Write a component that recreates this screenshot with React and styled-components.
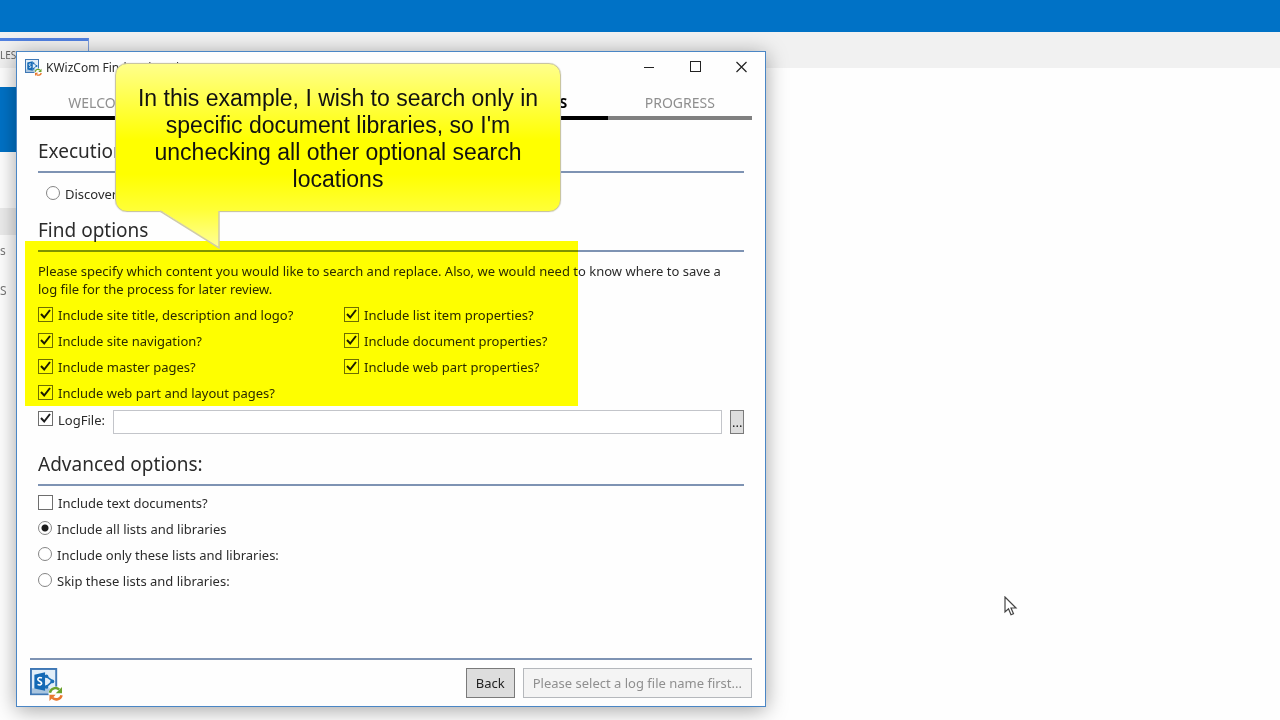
import { useState } from "react";
import styled, { createGlobalStyle } from "styled-components";

const colors = {
  brand: "#0072c6",
  ribbon: "#f1f1f1",
  windowBorder: "#4a86c5",
  rule: "#7e93b3",
  text: "#2b2b2b",
  muted: "#8f8f8f",
};

const GlobalStyle = createGlobalStyle`
  * {
    box-sizing: border-box;
  }

  body {
    margin: 0;
    background: #fefefe;
    color: ${colors.text};
    font-family: "Noto Sans", "Open Sans", sans-serif;
    font-size: 13px;
  }

  button,
  input {
    font: inherit;
  }
`;

const Desktop = styled.div`
  position: relative;
  min-height: 100vh;
  overflow: hidden;
`;

const SuiteBar = styled.header`
  height: 32px;
  background: ${colors.brand};
`;

const Ribbon = styled.nav`
  display: flex;
  height: 36px;
  padding-top: 6px;
  background: ${colors.ribbon};
`;

const RibbonTabs = styled.div`
  display: flex;
  gap: 22px;
  width: 89px;
  padding-top: 7px;
  border-top: 3px solid #5181e0;
  border-right: 1px solid #7d9ddc;
  color: #666;
  font-size: 10px;
  line-height: 14px;
`;

const SiteColumn = styled.aside`
  display: flex;
  flex-direction: column;
  width: 17px;
  padding-top: 19px;
  color: #777;
  font-size: 12px;
  line-height: 32px;
`;

const SiteLogo = styled.div`
  height: 65px;
  margin-bottom: 56px;
  background: ${colors.brand};
`;

const SelectedNav = styled.div`
  height: 27px;
  background: #ececec;
`;

const NavItem = styled.span`
  margin-bottom: 8px;
`;

const Window = styled.main`
  position: absolute;
  top: 51px;
  bottom: 13px;
  left: 16px;
  display: flex;
  flex-direction: column;
  width: 750px;
  border: 1px solid ${colors.windowBorder};
  background: #fefefe;
  box-shadow: 0 3px 20px rgba(0, 0, 0, 0.36);
`;

const TitleBar = styled.div`
  display: flex;
  align-items: center;
  height: 30px;
  padding-left: 8px;
`;

const Title = styled.h1`
  flex: 1;
  margin: 0 0 0 4px;
  font-size: 12px;
  font-weight: 400;
`;

const WindowButton = styled.button`
  display: grid;
  place-items: center;
  width: 46px;
  height: 30px;
  padding: 0;
  border: 0;
  background: none;
`;

const Steps = styled.ol`
  display: flex;
  margin: 0 13px;
  padding: 0;
  list-style: none;
`;

const Step = styled.li`
  flex: 1 1 0;
  padding: 10px 0 2px;
  border-bottom: 4px solid ${({ $reached }) => ($reached ? "#000" : "#808080")};
  color: ${({ $current }) => ($current ? "#000" : colors.muted)};
  font-size: 14px;
  font-weight: ${({ $current }) => ($current ? 700 : 400)};
  line-height: 22px;
  text-align: center;
`;

const Content = styled.form`
  flex: 1;
  padding: 13px 21px 0;
`;

const Section = styled.section`
  position: relative;
  margin-bottom: ${({ $gap }) => $gap}px;
`;

const SectionTitle = styled.h2`
  margin: 0;
  padding-bottom: 2px;
  border-bottom: 2px solid ${colors.rule};
  font-size: 19px;
  font-weight: 400;
  line-height: 36px;
`;

const Highlight = styled.div`
  position: absolute;
  top: 29px;
  right: 166px;
  bottom: 27px;
  left: -13px;
  background: #ff0;
  mix-blend-mode: multiply;
  pointer-events: none;
`;

const Hint = styled.p`
  margin: 10px 0 4px;
  padding-right: 8px;
  line-height: 18px;
`;

const OptionColumns = styled.div`
  display: grid;
  grid-template-columns: 306px 1fr;
`;

const OptionList = styled.div`
  padding: ${({ $inset }) => ($inset ? "8px 8px 0" : "4px 0 0")};
`;

const Option = styled.label`
  display: flex;
  align-items: center;
  gap: 5px;
  height: 26px;
`;

const Mark = styled.span`
  display: grid;
  flex: none;
  margin-bottom: 2px;

  > * {
    grid-area: 1 / 1;
  }

  svg {
    pointer-events: none;
  }
`;

const CheckInput = styled.input`
  width: 15px;
  height: 15px;
  margin: 0;
  border: 1px solid #6e6e6e;
  background: #fff;
  appearance: none;
`;

const RadioInput = styled.input`
  width: 14px;
  height: 14px;
  margin: 0;
  border: 1px solid #858585;
  border-radius: 50%;
  background: #fff;
  appearance: none;

  &:checked {
    background: radial-gradient(circle, #1c1c1c 3px, #fff 4px);
  }
`;

const LogRow = styled.div`
  display: flex;
  align-items: center;
  gap: 8px;
  height: 27px;
`;

const LogInput = styled.input`
  flex: 1;
  min-width: 0;
  height: 24px;
  margin-top: 5px;
  border: 1px solid #c3c5ca;
  background: #fff;
`;

const Button = styled.button`
  height: ${({ $small }) => ($small ? 24 : 30)}px;
  padding: ${({ $small }) => ($small ? "0 1px" : "0 9px")};
  border: 1px solid #7a7a7a;
  background: #dddddd;
  color: #222;
  line-height: 20px;

  &:disabled {
    border-color: #b5b8bc;
    background: #f4f4f4;
    color: ${colors.muted};
  }
`;

const BrowseButton = styled(Button)`
  width: 14px;
  margin-top: 5px;
`;

const Footer = styled.footer`
  display: flex;
  align-items: flex-start;
  gap: 8px;
  margin: 0 13px;
  padding: 8px 0 6px;
  border-top: 2px solid ${colors.rule};
`;

const FooterLogo = styled.div`
  flex: 1;
  height: 32px;
`;

const Callout = styled.aside`
  position: absolute;
  top: 63px;
  left: 115px;
  width: 446px;
  padding: 21px 20px 18px;
  border: 1px solid #c9c5a0;
  border-radius: 12px;
  background: linear-gradient(#ffff8c, #ffff00 52%, #ffff00 75%, #ffff38);
  box-shadow: 0 0 1px #b0b0b0;
  color: #111;
  font-family: "Liberation Sans", Arial, sans-serif;
  font-size: 23px;
  line-height: 27px;
  text-align: center;

  svg {
    position: absolute;
    top: 100%;
    left: 43px;
    margin-top: -1px;
  }
`;

const Pointer = styled.svg`
  position: absolute;
  top: 596px;
  left: 1004px;
`;

const AppLogo = ({ size }) => (
  <svg width={size} height={size} viewBox="0 0 34 34" aria-hidden="true">
    <rect x="1" y="1" width="26" height="26" fill="#e2eef8" stroke="#3f78b5" strokeWidth="2" />
    <path d="M2 21 H26 V26 H2 Z" fill="#a9c5df" />
    <path d="M16 8 L23.500 13.500 L16 20" fill="none" stroke="#1b6fb8" strokeWidth="1.600" />
    <circle cx="17" cy="8.500" r="1.900" fill="#1b6fb8" />
    <circle cx="17" cy="19.500" r="1.900" fill="#1b6fb8" />
    <circle cx="23" cy="13.800" r="2" fill="#1b6fb8" />
    <path d="M4.500 7 L15.500 4.500 V23.500 L4.500 21 Z" fill="#1469b5" />
    <path
      d="M12.300 10.300 C9.800 9.200 8 10 8.100 11.800 C8.200 13.800 12.100 13.500 12 15.700 C11.900 17.600 9.600 17.900 7.800 16.900"
      fill="none"
      stroke="#fff"
      strokeWidth="1.700"
    />
    <circle cx="26.500" cy="26.500" r="7.500" fill="#fefefe" />
    <path d="M20.500 25.500 C21.500 20.500 27 19.500 30 22.200" fill="none" stroke="#6aa22c" strokeWidth="2.600" />
    <path d="M33 19.500 V26 H26.500 Z" fill="#6aa22c" />
    <path d="M32.500 28 C31.500 32.500 26 33.500 23 30.800" fill="none" stroke="#e8772e" strokeWidth="2.600" />
    <path d="M20 34 V27.500 H26.500 Z" fill="#e8772e" />
  </svg>
);

const Checkbox = ({ label, initial = true }) => {
  const [checked, setChecked] = useState(initial);

  return (
    <Option>
      <Mark>
        <CheckInput type="checkbox" checked={checked} onChange={(e) => setChecked(e.target.checked)} />
        {checked && (
          <svg width="15" height="15" viewBox="0 0 15 15" aria-hidden="true">
            <path d="M3 7 L6.200 10.500 L12 3" fill="none" stroke="#1c1c1c" strokeWidth="2" />
          </svg>
        )}
      </Mark>
      {label}
    </Option>
  );
};

const Radio = ({ label, name, initial }) => (
  <Option>
    <Mark>
      <RadioInput type="radio" name={name} defaultChecked={initial} />
    </Mark>
    {label}
  </Option>
);

const steps = ["WELCOME", "", "", "OPTIONS", "PROGRESS"];
const currentStep = 3;

const siteOptions = [
  "Include site title, description and logo?",
  "Include site navigation?",
  "Include master pages?",
  "Include web part and layout pages?",
];

const itemOptions = ["Include list item properties?", "Include document properties?", "Include web part properties?"];

const App = () => (
  <Desktop>
    <GlobalStyle />
    <SuiteBar />
    <Ribbon>
      <RibbonTabs>
        <span>LES</span>
        <span>LIBRARY</span>
      </RibbonTabs>
    </Ribbon>
    <SiteColumn>
      <SiteLogo />
      <SelectedNav />
      <NavItem>s</NavItem>
      <NavItem>S</NavItem>
    </SiteColumn>

    <Window>
      <TitleBar>
        <AppLogo size={17} />
        <Title>KWizCom Find and Replace</Title>
        <WindowButton aria-label="Minimize">
          <svg width="12" height="12" viewBox="0 0 12 12">
            <path d="M0 6.500 H10" stroke="#222" />
          </svg>
        </WindowButton>
        <WindowButton aria-label="Maximize">
          <svg width="12" height="12" viewBox="0 0 12 12">
            <rect x="0.500" y="0.500" width="10" height="10" fill="none" stroke="#222" />
          </svg>
        </WindowButton>
        <WindowButton aria-label="Close">
          <svg width="12" height="12" viewBox="0 0 12 12">
            <path d="M0.500 1 L10.500 11 M10.500 1 L0.500 11" stroke="#222" strokeWidth="1.200" />
          </svg>
        </WindowButton>
      </TitleBar>

      <Steps>
        {steps.map((step, i) => (
          <Step key={i} $reached={i <= currentStep} $current={i === currentStep}>
            {step}
          </Step>
        ))}
      </Steps>

      <Content>
        <Section $gap={5}>
          <SectionTitle>Execution</SectionTitle>
          <OptionList $inset>
            <Radio name="mode" label="Discovery" />
          </OptionList>
        </Section>

        <Section $gap={13}>
          <SectionTitle>Find options</SectionTitle>
          <Hint>
            Please specify which content you would like to search and replace. Also, we would need to know where to
            save a log file for the process for later review.
          </Hint>
          <OptionColumns>
            <div>
              {siteOptions.map((label) => (
                <Checkbox key={label} label={label} />
              ))}
            </div>
            <div>
              {itemOptions.map((label) => (
                <Checkbox key={label} label={label} />
              ))}
            </div>
          </OptionColumns>
          <LogRow>
            <Checkbox label="LogFile:" />
            <LogInput type="text" aria-label="Log file path" />
            <BrowseButton type="button" $small>
              ...
            </BrowseButton>
          </LogRow>
          <Highlight />
        </Section>

        <Section $gap={0}>
          <SectionTitle>Advanced options:</SectionTitle>
          <OptionList>
            <Checkbox label="Include text documents?" initial={false} />
            <Radio name="lists" label="Include all lists and libraries" initial />
            <Radio name="lists" label="Include only these lists and libraries:" />
            <Radio name="lists" label="Skip these lists and libraries:" />
          </OptionList>
        </Section>
      </Content>

      <Footer>
        <FooterLogo>
          <AppLogo size={33} />
        </FooterLogo>
        <Button type="button">Back</Button>
        <Button type="button" disabled>
          Please select a log file name first...
        </Button>
      </Footer>
    </Window>

    <Callout>
      In this example, I wish to search only in specific document libraries, so I'm unchecking all other optional
      search locations
      <svg width="62" height="40" viewBox="0 0 62 40" aria-hidden="true">
        <defs>
          <linearGradient id="tail" x1="0" y1="0" x2="0" y2="1">
            <stop offset="0" stopColor="#ffff38" />
            <stop offset="1" stopColor="#ffff99" />
          </linearGradient>
        </defs>
        <path d="M1 0 L60 38 V0 Z" fill="url(#tail)" />
        <path d="M1 1 L60 38 V1" fill="none" stroke="#d0cca8" strokeWidth="1.500" />
      </svg>
    </Callout>

    <Pointer width="14" height="21" viewBox="0 0 14 21" aria-hidden="true">
      <path
        d="M1 1 V16 L4.500 12.800 L7 18.800 L9.500 17.700 L7 12 H12 Z"
        fill="#fff"
        stroke="#444"
        strokeWidth="1.200"
      />
    </Pointer>
  </Desktop>
);

export default App;
